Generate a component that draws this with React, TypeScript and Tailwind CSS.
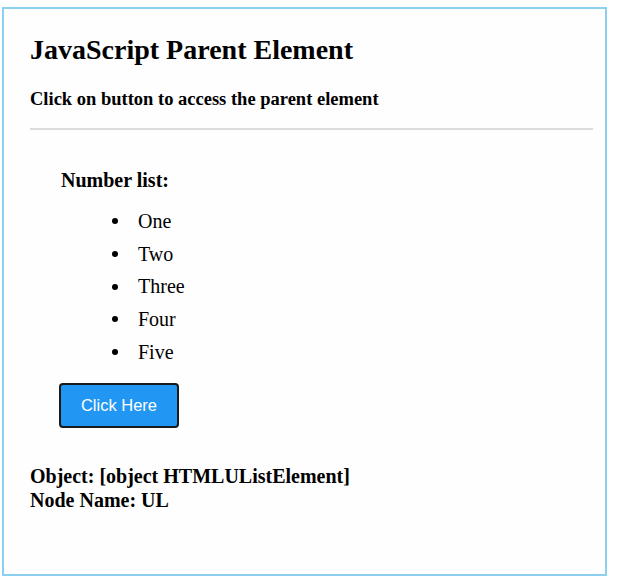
import React, { useState } from 'react';

const items = ['One', 'Two', 'Three', 'Four', 'Five'];

export default function App() {
  const [shown, setShown] = useState(true);

  return (
    <div className="w-[619px] h-[582px] bg-white pt-[7px] pl-[2px] font-['Liberation_Serif',serif] text-black">
      <div className="w-[605px] h-[569px] border-2 border-[#8ccfee] bg-[#fefefe] pl-[26px] pr-[12px]">
        <h1 className="mt-[26px] text-[28px] font-bold leading-[30px]">JavaScript Parent Element</h1>
        <p className="mt-[24px] text-[18.5px] font-bold leading-[20px]">Click on button to access the parent element</p>
        <hr className="mt-[19px] border-t-2 border-[#dcdcdc]" />

        <div className="pl-[31px] mt-[39px]">
          <p className="text-[20px] font-bold leading-[22px]">Number list:</p>
          <ul className="mt-[14px] pl-[51px] text-[20px] leading-[32.7px]">
            {items.map((it) => (
              <li key={it} className="flex items-center">
                <span className="w-[6px] h-[6px] rounded-full bg-black mr-[20px]" />
                {it}
              </li>
            ))}
          </ul>
          <button
            onClick={() => setShown(true)}
            className="mt-[14px] -ml-[2px] w-[120px] h-[45px] rounded-[4px] border-2 border-[#1a1a1a] bg-[#2196f3] text-white text-[16.5px] font-['Liberation_Sans',sans-serif]"
          >
            Click Here
          </button>
        </div>

        {shown && (
          <div className="mt-[36px] text-[20px] font-bold leading-[24px]">
            <div>Object: [object HTMLUListElement]</div>
            <div>Node Name: UL</div>
          </div>
        )}
      </div>
    </div>
  );
}
